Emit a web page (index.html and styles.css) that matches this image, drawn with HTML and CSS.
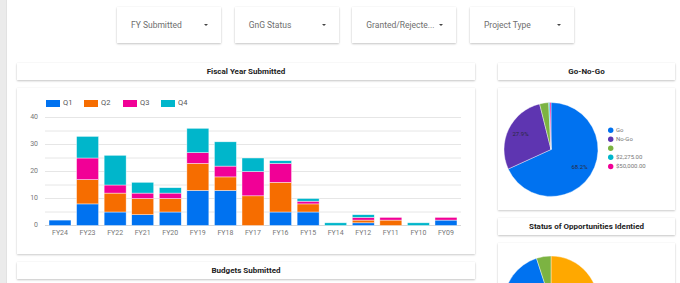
FILE: index.html
```html
<!DOCTYPE html>
<html>
<head>
<meta charset="utf-8">
<link rel="stylesheet" href="styles.css">
</head>
<body>
<div class="page">
  <aside class="rail"></aside>
  <main class="main">
    <div class="filters">
      <div class="filter"><span class="filter-text">FY Submitted</span><span class="caret"></span></div>
      <div class="filter"><span class="filter-text">GnG Status</span><span class="caret"></span></div>
      <div class="filter"><span class="filter-text">Granted/Rejecte...</span><span class="caret"></span></div>
      <div class="filter"><span class="filter-text">Project Type</span><span class="caret"></span></div>
    </div>
    <div class="grid">
      <div class="col col-left">
        <div class="title">Fiscal Year Submitted</div>
        <div class="card bar-card">
          <svg class="chart" width="458" height="166" viewBox="0 0 458 166">
            <g class="legend">
              <rect x="29" y="12" width="14" height="7" fill="#0072f0"/><text x="46" y="15.5">Q1</text>
              <rect x="67" y="12" width="14" height="7" fill="#f66d00"/><text x="84" y="15.5">Q2</text>
              <rect x="106" y="12" width="14" height="7" fill="#f10096"/><text x="123" y="15.5">Q3</text>
              <rect x="144" y="12" width="14" height="7" fill="#00b6cb"/><text x="161" y="15.5">Q4</text>
            </g>
            <g class="grid-lines">
              <line x1="28" x2="444" y1="29.5" y2="29.5"/>
              <line x1="28" x2="444" y1="43" y2="43"/>
              <line x1="28" x2="444" y1="56.5" y2="56.5"/>
              <line x1="28" x2="444" y1="70" y2="70"/>
              <line x1="28" x2="444" y1="83.5" y2="83.5"/>
              <line x1="28" x2="444" y1="97" y2="97"/>
              <line x1="28" x2="444" y1="110.5" y2="110.5"/>
              <line x1="28" x2="444" y1="124" y2="124"/>
              <line class="base" x1="28" x2="444" y1="137.5" y2="137.5"/>
            </g>
            <g class="y-labels">
              <text x="21" y="29.5">40</text>
              <text x="21" y="56.5">30</text>
              <text x="21" y="83.5">20</text>
              <text x="21" y="110.5">10</text>
              <text x="21" y="137.5">0</text>
            </g>
            <g class="bars">
              <!-- FY24 -->
              <rect class="q1" x="32" y="132.1" width="22" height="5.4"/>
              <!-- FY23 -->
              <rect class="q1" x="59.57" y="115.9" width="22" height="21.6"/>
              <rect class="q2" x="59.57" y="91.6" width="22" height="24.3"/>
              <rect class="q3" x="59.57" y="70" width="22" height="21.6"/>
              <rect class="q4" x="59.57" y="48.4" width="22" height="21.6"/>
              <!-- FY22 -->
              <rect class="q1" x="87.14" y="124" width="22" height="13.5"/>
              <rect class="q2" x="87.14" y="105.1" width="22" height="18.9"/>
              <rect class="q3" x="87.14" y="97" width="22" height="8.1"/>
              <rect class="q4" x="87.14" y="67.3" width="22" height="29.7"/>
              <!-- FY21 -->
              <rect class="q1" x="114.71" y="126.7" width="22" height="10.8"/>
              <rect class="q2" x="114.71" y="110.5" width="22" height="16.2"/>
              <rect class="q3" x="114.71" y="105.1" width="22" height="5.4"/>
              <rect class="q4" x="114.71" y="94.3" width="22" height="10.8"/>
              <!-- FY20 -->
              <rect class="q1" x="142.28" y="124" width="22" height="13.5"/>
              <rect class="q2" x="142.28" y="110.5" width="22" height="13.5"/>
              <rect class="q3" x="142.28" y="105.1" width="22" height="5.4"/>
              <rect class="q4" x="142.28" y="99.7" width="22" height="5.4"/>
              <!-- FY19 -->
              <rect class="q1" x="169.85" y="102.4" width="22" height="35.1"/>
              <rect class="q2" x="169.85" y="75.4" width="22" height="27"/>
              <rect class="q3" x="169.85" y="64.6" width="22" height="10.8"/>
              <rect class="q4" x="169.85" y="40.3" width="22" height="24.3"/>
              <!-- FY18 -->
              <rect class="q1" x="197.42" y="102.4" width="22" height="35.1"/>
              <rect class="q2" x="197.42" y="88.9" width="22" height="13.5"/>
              <rect class="q3" x="197.42" y="78.1" width="22" height="10.8"/>
              <rect class="q4" x="197.42" y="53.8" width="22" height="24.3"/>
              <!-- FY17 -->
              <rect class="q2" x="224.99" y="107.8" width="22" height="29.7"/>
              <rect class="q3" x="224.99" y="83.5" width="22" height="24.3"/>
              <rect class="q4" x="224.99" y="70" width="22" height="13.5"/>
              <!-- FY16 -->
              <rect class="q1" x="252.56" y="124" width="22" height="13.5"/>
              <rect class="q2" x="252.56" y="94.3" width="22" height="29.7"/>
              <rect class="q3" x="252.56" y="75.4" width="22" height="18.9"/>
              <rect class="q4" x="252.56" y="72.7" width="22" height="2.7"/>
              <!-- FY15 -->
              <rect class="q1" x="280.13" y="124" width="22" height="13.5"/>
              <rect class="q2" x="280.13" y="115.9" width="22" height="8.1"/>
              <rect class="q3" x="280.13" y="113.2" width="22" height="2.7"/>
              <rect class="q4" x="280.13" y="110.5" width="22" height="2.7"/>
              <!-- FY14 -->
              <rect class="q4" x="307.7" y="134.8" width="22" height="2.7"/>
              <!-- FY12 -->
              <rect class="q1" x="335.27" y="134.8" width="22" height="2.7"/>
              <rect class="q2" x="335.27" y="132.1" width="22" height="2.7"/>
              <rect class="q3" x="335.27" y="129.4" width="22" height="2.7"/>
              <rect class="q4" x="335.27" y="126.7" width="22" height="2.7"/>
              <!-- FY11 -->
              <rect class="q2" x="362.84" y="132.1" width="22" height="5.4"/>
              <rect class="q3" x="362.84" y="129.4" width="22" height="2.7"/>
              <!-- FY10 -->
              <rect class="q4" x="390.41" y="134.8" width="22" height="2.7"/>
              <!-- FY09 -->
              <rect class="q1" x="417.98" y="132.1" width="22" height="5.4"/>
              <rect class="q3" x="417.98" y="129.4" width="22" height="2.7"/>
            </g>
            <g class="x-labels">
              <text x="43" y="145">FY24</text>
              <text x="70.57" y="145">FY23</text>
              <text x="98.14" y="145">FY22</text>
              <text x="125.71" y="145">FY21</text>
              <text x="153.28" y="145">FY20</text>
              <text x="180.85" y="145">FY19</text>
              <text x="208.42" y="145">FY18</text>
              <text x="235.99" y="145">FY17</text>
              <text x="263.56" y="145">FY16</text>
              <text x="291.13" y="145">FY15</text>
              <text x="318.7" y="145">FY14</text>
              <text x="346.27" y="145">FY12</text>
              <text x="373.84" y="145">FY11</text>
              <text x="401.41" y="145">FY10</text>
              <text x="428.98" y="145">FY09</text>
            </g>
          </svg>
        </div>
        <div class="title">Budgets Submitted</div>
      </div>
      <div class="col col-right">
        <div class="title">Go-No-Go</div>
        <div class="card pie-card">
          <svg class="chart" width="177" height="122" viewBox="0 0 177 122">
            <g class="slices">
              <path d="M53 61.5 L53 14.5 A47 47 0 1 1 10.23 80.98 Z" fill="#0072f0"/>
              <path d="M53 61.5 L10.23 80.98 A47 47 0 0 1 41.60 15.91 Z" fill="#5e35b1"/>
              <path d="M53 61.5 L41.60 15.91 A47 47 0 0 1 50.64 14.56 Z" fill="#7cb342"/>
              <path d="M53 61.5 L50.64 14.56 A47 47 0 0 1 51.82 14.51 Z" fill="#00b6cb"/>
              <path d="M53 61.5 L51.82 14.51 A47 47 0 0 1 53 14.5 Z" fill="#f10096"/>
            </g>
            <g class="pie-labels">
              <text x="22.5" y="46.5">27.9%</text>
              <text x="81.5" y="79.3">68.2%</text>
            </g>
            <g class="pie-legend">
              <circle cx="112.7" cy="42.3" r="2.7" fill="#0072f0"/><text x="118" y="42.3">Go</text>
              <circle cx="112.7" cy="51.3" r="2.7" fill="#5e35b1"/><text x="118" y="51.3">No-Go</text>
              <circle cx="112.7" cy="60.3" r="2.7" fill="#7cb342"/>
              <circle cx="112.7" cy="69.3" r="2.7" fill="#00b6cb"/><text x="118" y="69.3">$2,275.00</text>
              <circle cx="112.7" cy="78.5" r="2.7" fill="#f10096"/><text x="118" y="78.5">$50,000.00</text>
            </g>
          </svg>
        </div>
        <div class="title">Status of Opportunities Identied</div>
        <div class="card pie-card">
          <svg class="chart" width="177" height="122" viewBox="0 0 177 122">
            <g class="slices">
              <path d="M53 60 L53 13 A47 47 0 1 1 38.48 104.70 Z" fill="#ffa800"/>
              <path d="M53 60 L38.48 104.70 A47 47 0 0 1 38.48 15.30 Z" fill="#0072f0"/>
              <path d="M53 60 L38.48 15.30 A47 47 0 0 1 53 13 Z" fill="#7cb342"/>
            </g>
          </svg>
        </div>
      </div>
    </div>
  </main>
</div>
</body>
</html>
```
FILE: styles.css
```css
html, body {
  margin: 0;
  padding: 0;
  background: #fff;
  font-family: Roboto, "Liberation Sans", Arial, sans-serif;
  height: 283px;
  overflow: hidden;
}

.page {
  display: flex;
  height: 283px;
}

.rail {
  flex: none;
  width: 7px;
  background: #ebebeb;
  border-right: 1px solid #e2e2e2;
  box-sizing: border-box;
}

.main {
  flex: 1;
  padding-top: 7px;
  min-width: 0;
}

.filters {
  display: flex;
  gap: 13.67px;
  padding-left: 110px;
}

.filter {
  width: 104px;
  height: 36px;
  box-sizing: border-box;
  padding: 0 13px 0 14px;
  display: flex;
  align-items: center;
  justify-content: space-between;
  background: #fff;
  box-shadow: 0 1px 2px rgba(0, 0, 0, 0.22), 0 0 1px rgba(0, 0, 0, 0.08);
  font-size: 8.5px;
  color: #6e6e6e;
}

.caret {
  width: 0;
  height: 0;
  border-left: 2px solid transparent;
  border-right: 2px solid transparent;
  border-top: 2px solid #444;
}

.grid {
  display: flex;
  gap: 23px;
  padding: 20px 5px 0 10px;
}

.col {
  display: flex;
  flex-direction: column;
  gap: 8px;
}

.col-left {
  width: 458px;
  flex: none;
}

.col-right {
  width: 177px;
  flex: none;
}

.title {
  height: 17px;
  flex: none;
  display: flex;
  align-items: center;
  justify-content: center;
  background: #fff;
  box-shadow: 0 1px 2px rgba(0, 0, 0, 0.22), 0 0 1px rgba(0, 0, 0, 0.08);
  font-size: 8px;
  font-weight: 700;
  color: #222;
}

.card {
  flex: none;
  background: #fff;
  box-shadow: 0 1px 2px rgba(0, 0, 0, 0.2), 0 0 1px rgba(0, 0, 0, 0.08);
}

.bar-card {
  height: 166px;
}

.pie-card {
  height: 122px;
}

.chart {
  display: block;
}

.legend text {
  font-size: 7.5px;
  fill: #555;
  dominant-baseline: middle;
}

.grid-lines line {
  stroke: #e6e6e6;
  stroke-width: 1;
}

.grid-lines .base {
  stroke: #d6d6d6;
}

.y-labels text {
  font-size: 7px;
  fill: #777;
  text-anchor: end;
  dominant-baseline: middle;
}

.x-labels text {
  font-size: 7px;
  fill: #777;
  text-anchor: middle;
  dominant-baseline: middle;
}

.bars rect {
  stroke: #fff;
  stroke-width: 0.6;
  stroke-opacity: 0.7;
}

.q1 { fill: #0072f0; }
.q2 { fill: #f66d00; }
.q3 { fill: #f10096; }
.q4 { fill: #00b6cb; }

.slices path {
  stroke: #fff;
  stroke-width: 0.4;
}

.pie-labels text {
  font-size: 6px;
  fill: #2a2a40;
  text-anchor: middle;
  dominant-baseline: middle;
}

.pie-legend text {
  font-size: 6px;
  fill: #777;
  dominant-baseline: middle;
}
```
